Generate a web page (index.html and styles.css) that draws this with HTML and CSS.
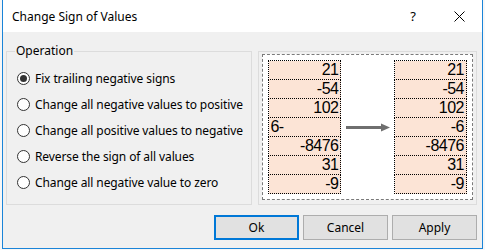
FILE: index.html
```html
<!DOCTYPE html>
<html lang="en">
<head>
	<meta charset="utf-8">
	<title>Change Sign of Values</title>
	<link rel="stylesheet" href="styles.css">
</head>
<body>
<div class="window">
	<div class="titlebar">
		<span class="title">Change Sign of Values</span>
		<span class="tb-btn help">?</span>
		<span class="tb-btn close">
			<svg width="11" height="11" viewBox="0 0 11 11"><path d="M0.5 0.5 L10.5 10.5 M10.5 0.5 L0.5 10.5" stroke="#000" stroke-width="1" fill="none"/></svg>
		</span>
	</div>
	<div class="content">
		<div class="main">
			<fieldset class="group">
				<legend>Operation</legend>
				<label class="opt"><span class="radio checked"></span>Fix trailing negative signs</label>
				<label class="opt"><span class="radio"></span>Change all negative values to positive</label>
				<label class="opt"><span class="radio"></span>Change all positive values to negative</label>
				<label class="opt"><span class="radio"></span>Reverse the sign of all values</label>
				<label class="opt"><span class="radio"></span>Change all negative value to zero</label>
			</fieldset>
			<div class="preview">
				<div class="sheet">
					<table class="cells">
						<tr><td>21</td></tr>
						<tr><td>-54</td></tr>
						<tr><td>102</td></tr>
						<tr><td class="left">6-</td></tr>
						<tr><td>-8476</td></tr>
						<tr><td>31</td></tr>
						<tr><td>-9</td></tr>
					</table>
					<div class="arrow">
						<svg width="44" height="9" viewBox="0 0 44 9"><path d="M0 4.5 H36" stroke="#6f6f6f" stroke-width="3"/><path d="M35 0.5 L44 4.5 L35 8.5 Z" fill="#6f6f6f"/></svg>
					</div>
					<table class="cells">
						<tr><td>21</td></tr>
						<tr><td>-54</td></tr>
						<tr><td>102</td></tr>
						<tr><td>-6</td></tr>
						<tr><td>-8476</td></tr>
						<tr><td>31</td></tr>
						<tr><td>-9</td></tr>
					</table>
				</div>
			</div>
		</div>
		<div class="buttons">
			<button class="default">Ok</button>
			<button>Cancel</button>
			<button>Apply</button>
		</div>
	</div>
</div>
</body>
</html>
```

FILE: styles.css
```css
body{
	margin: 0;
	background: #f7f7f7;
	font: 12px "Noto Sans", "Open Sans", sans-serif;
	color: #000;
}
.window{
	margin-left: 2px;
	width: 479px;
	height: 248px;
	border: 1px solid #1a84d8;
	border-top: none;
	background: #f0f0f0;
	display: flex;
	flex-direction: column;
}
.titlebar{
	height: 32px;
	background: #fff;
	display: flex;
	align-items: center;
}
.title{
	flex: 1;
	padding-left: 9px;
	font-size: 12px;
}
.tb-btn{
	width: 46px;
	height: 32px;
	display: flex;
	align-items: center;
	justify-content: center;
}
.help{
	font-size: 13px;
}
.close svg{
	display: block;
}
.content{
	flex: 1;
	padding: 11px 5px 0 3px;
}
.main{
	display: flex;
	align-items: flex-start;
	gap: 6px;
}
.group{
	margin: 0;
	width: 247px;
	height: 162px;
	box-sizing: border-box;
	border: 1px solid #dcdcdc;
	padding: 6px 0 0 10px;
}
.group legend{
	padding: 0 1px;
	margin-left: -2px;
	line-height: 16px;
}
.opt{
	display: flex;
	align-items: center;
	height: 26px;
	white-space: nowrap;
	letter-spacing: -0.1px;
}
.radio{
	width: 11px;
	height: 11px;
	border: 1px solid #333;
	border-radius: 50%;
	background: #fff;
	margin-right: 5px;
	position: relative;
}
.radio.checked::after{
	content: "";
	position: absolute;
	left: 2px;
	top: 2px;
	width: 7px;
	height: 7px;
	border-radius: 50%;
	background: #333;
}
.preview{
	margin-top: 8px;
	width: 219px;
	height: 154px;
	box-sizing: border-box;
	border: 1px solid #dcdcdc;
	padding: 2px 3px;
}
.sheet{
	height: 146px;
	box-sizing: border-box;
	border: 1px dashed #7a7a7a;
	background: #fff;
	padding: 5px;
	display: flex;
	align-items: center;
	justify-content: space-between;
}
.cells{
	border-collapse: collapse;
	font: 16px "Liberation Sans", Arial, sans-serif;
	letter-spacing: -0.5px;
}
.cells td{
	width: 68px;
	height: 18px;
	padding: 0 2px 0 1px;
	border: 1px dotted #000;
	background: #fce4d6;
	text-align: right;
	line-height: 18px;
}
.cells td.left{
	text-align: left;
}
.arrow svg{
	display: block;
}
.buttons{
	margin-top: 10px;
	display: flex;
	justify-content: flex-end;
	gap: 4px;
}
.buttons button{
	width: 85px;
	height: 25px;
	background: #e1e1e1;
	border: 1px solid #adadad;
	font: inherit;
	color: #000;
	padding: 0;
}
.buttons button.default{
	border: 2px solid #0078d7;
}
```
